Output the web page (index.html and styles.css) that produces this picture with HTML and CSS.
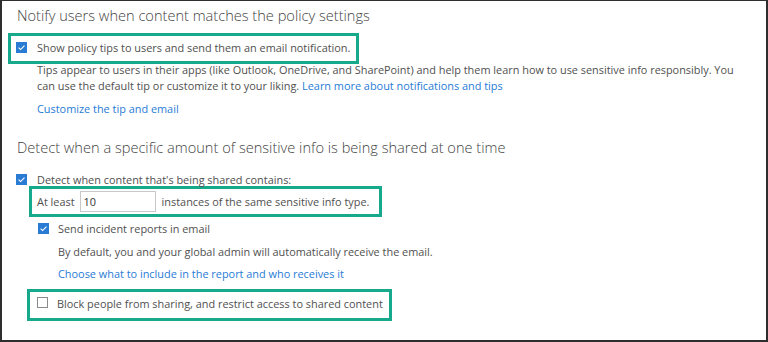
FILE: index.html
```html
<!DOCTYPE html>
<html lang="en">
<head>
<meta charset="utf-8">
<title>Policy settings</title>
<link rel="stylesheet" href="styles.css">
</head>
<body>
<div class="frame">
  <h2 class="heading h-first">Notify users when content matches the policy settings</h2>

  <div class="callout callout-tips">
    <span class="cb cb-on"><svg viewBox="0 0 11 11" width="11" height="11"><rect width="11" height="11" fill="#2a7bd3"/><polyline points="2.6,5.7 4.6,7.6 8.5,3.6" fill="none" stroke="#fff" stroke-width="1.1"/></svg></span>
    <span class="label">Show policy tips to users and send them an email notification.</span>
  </div>

  <p class="desc"><span class="line">Tips appear to users in their apps (like Outlook, OneDrive, and SharePoint) and help them learn how to use sensitive info responsibly. You</span><span class="line">can use the default tip or customize it to your liking. <a class="link" href="#">Learn more about notifications and tips</a></span></p>

  <p class="desc link-row"><a class="link" href="#">Customize the tip and email</a></p>

  <h2 class="heading h-second">Detect when a specific amount of sensitive info is being shared at one time</h2>

  <div class="row row-detect">
    <span class="cb cb-on"><svg viewBox="0 0 11 11" width="11" height="11"><rect width="11" height="11" fill="#2a7bd3"/><polyline points="2.6,5.7 4.6,7.6 8.5,3.6" fill="none" stroke="#fff" stroke-width="1.1"/></svg></span>
    <span class="label">Detect when content that's being shared contains:</span>
  </div>

  <div class="callout callout-count">
    <span class="label">At least</span>
    <span class="input">10</span>
    <span class="label">instances of the same sensitive info type.</span>
  </div>

  <div class="row row-report">
    <span class="cb cb-on"><svg viewBox="0 0 11 11" width="11" height="11"><rect width="11" height="11" fill="#2a7bd3"/><polyline points="2.6,5.7 4.6,7.6 8.5,3.6" fill="none" stroke="#fff" stroke-width="1.1"/></svg></span>
    <span class="label">Send incident reports in email</span>
  </div>

  <p class="sub sub-text">By default, you and your global admin will automatically receive the email.</p>
  <p class="sub sub-link"><a class="link" href="#">Choose what to include in the report and who receives it</a></p>

  <div class="callout callout-block">
    <span class="cb cb-off"></span>
    <span class="label">Block people from sharing, and restrict access to shared content</span>
  </div>
</div>
</body>
</html>
```
FILE: styles.css
```css
html, body {
  margin: 0;
  padding: 0;
  background: #ffffff;
}

.frame {
  box-sizing: border-box;
  width: 768px;
  height: 342px;
  border: 2px solid #2e2e2e;
  border-top-width: 1px;
  padding: 4px 0 0 6px;
  font-family: "Open Sans", "Noto Sans", sans-serif;
  font-size: 10.9px;
  line-height: 16px;
  color: #505050;
  overflow: hidden;
}

.heading {
  margin: 0 0 0 9px;
  font-size: 14.6px;
  font-weight: 300;
  line-height: 20px;
  color: #3f3f3f;
}

.h-second {
  margin-top: 20px;
}

.callout {
  display: flex;
  align-items: flex-start;
  width: fit-content;
  border: 3px solid #17a98b;
  padding: 4px 6px 5px 5px;
}

.callout-tips {
  margin-top: 8px;
}

.cb {
  flex: none;
  width: 11px;
  height: 11px;
  margin-top: 2px;
  margin-right: 10px;
  box-sizing: border-box;
}

.cb svg {
  display: block;
}

.cb-off {
  border: 1px solid #8a8a8a;
  background: #ffffff;
}

.label {
  white-space: nowrap;
}

.desc {
  margin: -2px 0 0 29px;
  width: 720px;
}

.line {
  display: block;
  width: fit-content;
  white-space: nowrap;
}

.link-row {
  margin-top: 7px;
}

.link {
  color: #1f7bd6;
  text-decoration: none;
}

.row {
  display: flex;
  align-items: flex-start;
}

.row-detect {
  margin: 15px 0 0 8px;
}

.callout-count {
  margin: -2px 0 0 21px;
  align-items: center;
  padding: 0 10px 0 5px;
  height: 25px;
  box-sizing: content-box;
}

.input {
  box-sizing: border-box;
  width: 76px;
  height: 21px;
  margin: 0 6px 0 5px;
  padding: 1px 3px;
  border: 1px solid #c8c8c8;
  color: #333333;
  line-height: 17px;
}

.row-report {
  margin: 4px 0 0 30px;
}

.row-report .cb {
  margin-right: 9px;
}

.sub {
  margin: 0 0 0 50px;
}

.sub-text {
  margin-top: 7px;
}

.sub-link {
  margin-top: 6px;
}

.callout-block {
  margin: 7px 0 0 19px;
  padding: 4px 6px 6px 7px;
}

.callout-block .cb {
  margin-top: 1px;
  margin-right: 9px;
}
```
